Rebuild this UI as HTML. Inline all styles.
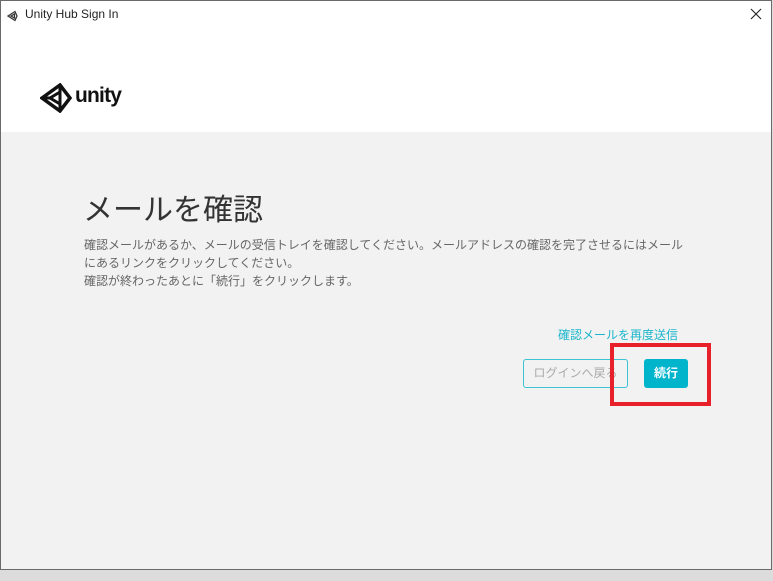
<!DOCTYPE html>
<html><head><meta charset="utf-8"><style>
body{margin:0;width:773px;height:581px;background:#dcdcdc;position:relative;overflow:hidden;font-family:"Liberation Sans","Noto Sans CJK JP",sans-serif}
.win{position:absolute;left:0;top:0;width:770px;height:568px;border:1px solid #6a6a6a;background:#f2f2f2}
.top{position:absolute;left:0;top:0;width:770px;height:131px;background:#fff}
.t{position:absolute;left:24px;top:6px;font-size:12px;color:#222}
h1{position:absolute;left:82px;top:184px;margin:0;font-weight:normal;font-size:30px;color:#333}
.p{position:absolute;left:83px;top:235px;font-size:12px;line-height:18px;color:#666;width:620px}
.link{position:absolute;left:557px;top:325px;font-size:12px;color:#1bb6cc}
.b1{position:absolute;left:522px;top:358px;width:105px;height:29px;border:1px solid #3cc3d5;border-radius:3px;box-sizing:border-box;font-size:12px;color:#aaa;text-align:center;line-height:27px}
.b2{position:absolute;left:643px;top:358px;width:44px;height:29px;background:#00b4cc;border-radius:3px;font-size:12px;color:#fff;text-align:center;line-height:29px;font-weight:bold}
.red{position:absolute;left:609px;top:342px;width:93px;height:55px;border:4px solid #e8202a}
</style></head><body>
<div class="win">
<div class="top">
<svg style="position:absolute;left:6px;top:9px" width="12" height="12" viewBox="0 0 24 24"><path d="M2 12 L16 3 L20 12 L16 21 Z M8 12 L15 8 L15 16 Z" fill="none" stroke="#333" stroke-width="2.5"/></svg>
<div class="t">Unity Hub Sign In</div>
<svg style="position:absolute;left:749px;top:7px" width="12" height="12" viewBox="0 0 12 12"><path d="M1 1 L11 11 M11 1 L1 11" stroke="#222" stroke-width="1.1"/></svg>
<svg style="position:absolute;left:39px;top:82px" width="32" height="30" viewBox="0 0 32 30"><path d="M2 15 L20 2 L30 15 L20 28 Z" fill="none" stroke="#111" stroke-width="3.5" stroke-linejoin="miter"/><path d="M10 15 L20 9 L20 21 Z M20 2 V9 M2 15 H10 M20 21 V28" fill="none" stroke="#111" stroke-width="3"/></svg>
<div style="position:absolute;left:74px;top:83px;font-size:21px;font-weight:bold;color:#111;letter-spacing:-0.8px">unity</div>
</div>
<h1>メールを確認</h1>
<div class="p">確認メールがあるか、メールの受信トレイを確認してください。メールアドレスの確認を完了させるにはメール<br>にあるリンクをクリックしてください。<br>確認が終わったあとに「続行」をクリックします。</div>
<div class="link">確認メールを再度送信</div>
<div class="b1">ログインへ戻る</div>
<div class="b2">続行</div>
<div class="red"></div>
</div>
</body></html>
